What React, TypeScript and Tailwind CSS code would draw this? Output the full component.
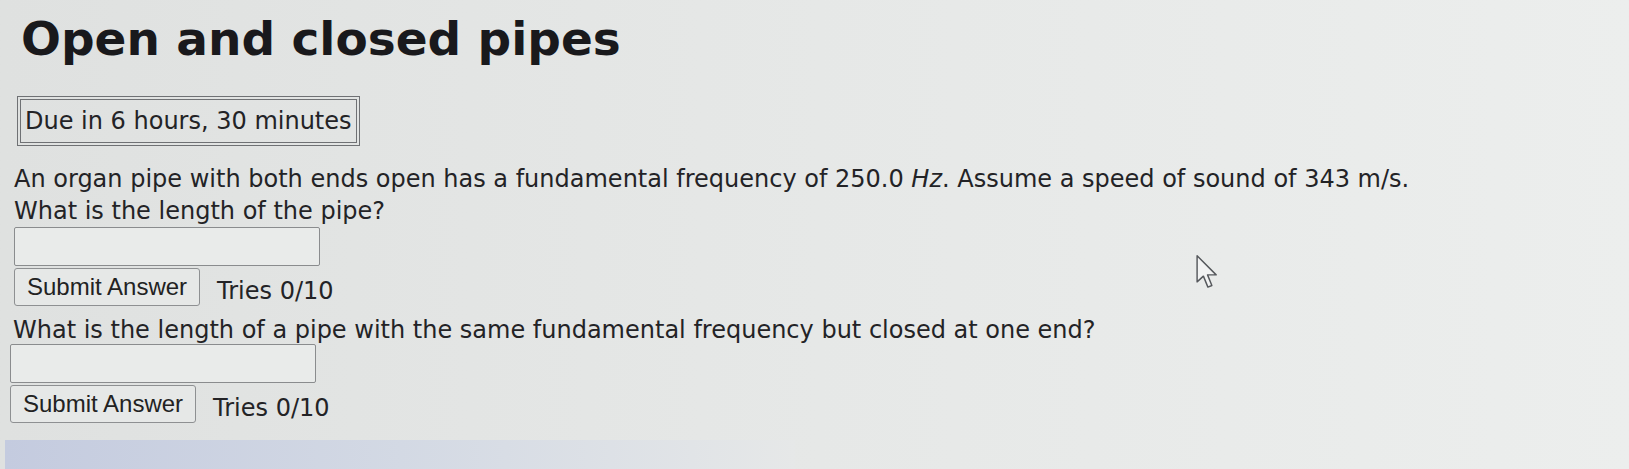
import React from "react";

/* Assignment question page: open and closed pipes */

function Cursor() {
  return (
    <svg
      className="absolute left-[1194px] top-[254px]"
      width="26"
      height="36"
      viewBox="0 0 13 20"
    >
      <path
        d="M1 1 L1 15.5 L4.5 12.3 L7 18.4 L9.2 17.5 L6.8 11.6 L11.6 11.6 Z"
        fill="#f2f3f3"
        stroke="#55585c"
        strokeWidth="0.8"
        strokeLinejoin="round"
      />
    </svg>
  );
}

function AnswerBlock() {
  return (
    <div>
      <input
        type="text"
        className="block h-[39px] w-[306px] rounded-[2px] border border-[#8a8c8e] bg-[#e9ebea] outline-none"
      />
      <div className="mt-[2px] flex items-center">
        <button className="h-[38px] rounded-[3px] border border-[#8e9092] bg-[#e6e8e7] px-[12px] font-['Liberation_Sans',Arial,sans-serif] text-[24px] leading-[28px] text-[#222]">
          Submit Answer
        </button>
        <span className="ml-[17px] mt-[8px] text-[24px] leading-[28px]">
          Tries 0/10
        </span>
      </div>
    </div>
  );
}

export default function App() {
  return (
    <div className="relative h-[469px] w-[1629px] overflow-hidden bg-gradient-to-r from-[#dfe1e0] via-[#e6e8e7] to-[#eceeed] font-['DejaVu_Sans',Verdana,sans-serif] text-[#232326]">
      <div className="pl-[13px]">
        <h1 className="pl-[8px] pt-[11px] text-[47px] font-bold leading-[56px] text-[#19191c]">
          Open and closed pipes
        </h1>

        <div className="mt-[29px] pl-[4px]">
          <span className="inline-block border-[4px] border-double border-[#6f7174] px-[4px] py-[7px] text-[24px] leading-[28px]">
            Due in 6 hours, 30 minutes
          </span>
        </div>

        <p className="mt-[17px] pl-[1px] text-[24px] leading-[32px]">
          An organ pipe with both ends open has a fundamental frequency of
          250.0 <i>Hz</i>. Assume a speed of sound of 343 m/s.
          <br />
          What is the length of the pipe?
        </p>

        <div className="pl-[1px]">
          <AnswerBlock />
        </div>

        <p className="mt-[10px] text-[24px] leading-[28px]">
          What is the length of a pipe with the same fundamental frequency but
          closed at one end?
        </p>

        <div className="-ml-[3px]">
          <AnswerBlock />
        </div>

        <div className="-ml-[8px] mt-[17px] h-[40px] w-[790px] bg-gradient-to-r from-[#c4cbdf] via-[#d3d9e4] to-[#e6e8e8]" />
      </div>

      <Cursor />
    </div>
  );
}
